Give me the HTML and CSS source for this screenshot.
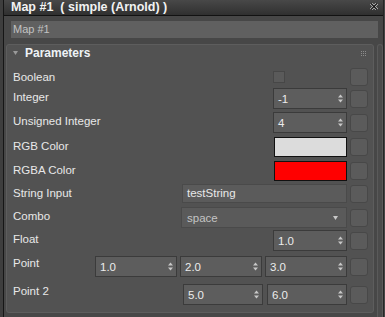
FILE: index.html
```html
<!DOCTYPE html>
<html>
<head>
<meta charset="utf-8">
<link rel="stylesheet" href="styles.css">
</head>
<body>
<div class="frame">
  <div class="left-strip"></div>
  <div class="window">
    <div class="titlebar">
      <span class="title">Map #1  ( simple (Arnold) )</span>
      <svg class="close" width="8" height="7" viewBox="0 0 8 7">
        <path d="M1 0.5 L7 6.5 M7 0.5 L1 6.5" stroke="#d8d8d8" stroke-width="2.6" stroke-linecap="square"/>
        <path d="M1 0.5 L7 6.5 M7 0.5 L1 6.5" stroke="#141414" stroke-width="1.4" stroke-linecap="square"/>
      </svg>
    </div>
    <div class="name-field">Map #1</div>
    <div class="content">
      <div class="panel">
        <div class="panel-head">
          <svg class="tri" width="5" height="4" viewBox="0 0 5 4"><polygon points="0,0 5,0 2.5,4" fill="#9a9a9a"/></svg>
          <span class="ptitle">Parameters</span>
          <svg class="grip" width="5" height="5" viewBox="0 0 5 5">
            <g fill="#8c8c8c">
              <rect x="0" y="0" width="1" height="1"/><rect x="2" y="0" width="1" height="1"/><rect x="4" y="0" width="1" height="1"/>
              <rect x="0" y="2" width="1" height="1"/><rect x="2" y="2" width="1" height="1"/><rect x="4" y="2" width="1" height="1"/>
              <rect x="0" y="4" width="1" height="1"/><rect x="2" y="4" width="1" height="1"/><rect x="4" y="4" width="1" height="1"/>
            </g>
          </svg>
        </div>
        <div class="rows">
          <div class="row row-bool">
            <span class="label">Boolean</span>
            <div class="ctl ctl-single"><span class="checkbox"></span></div>
            <span class="sq"></span>
          </div>
          <div class="row row-int">
            <span class="label">Integer</span>
            <div class="ctl ctl-single"><div class="spin"><span class="val">-1</span><svg class="arr" width="5" height="9" viewBox="0 0 5 9"><polygon points="0,3.5 5,3.5 2.5,0.5" fill="#c8c8c8"/><polygon points="0,5.5 5,5.5 2.5,8.5" fill="#c8c8c8"/></svg></div></div>
            <span class="sq"></span>
          </div>
          <div class="row row-uint">
            <span class="label">Unsigned Integer</span>
            <div class="ctl ctl-single"><div class="spin"><span class="val">4</span><svg class="arr" width="5" height="9" viewBox="0 0 5 9"><polygon points="0,3.5 5,3.5 2.5,0.5" fill="#c8c8c8"/><polygon points="0,5.5 5,5.5 2.5,8.5" fill="#c8c8c8"/></svg></div></div>
            <span class="sq"></span>
          </div>
          <div class="row row-rgb">
            <span class="label">RGB Color</span>
            <div class="ctl ctl-single"><span class="swatch swatch-grey"></span></div>
            <span class="sq"></span>
          </div>
          <div class="row row-rgba">
            <span class="label">RGBA Color</span>
            <div class="ctl ctl-single"><span class="swatch swatch-red"></span></div>
            <span class="sq"></span>
          </div>
          <div class="row row-str">
            <span class="label">String Input</span>
            <div class="ctl ctl-wide"><div class="text-field">testString</div></div>
            <span class="sq"></span>
          </div>
          <div class="row row-combo">
            <span class="label">Combo</span>
            <div class="ctl ctl-wide"><div class="combo"><span class="combo-val">space</span><svg class="carr" width="5" height="4" viewBox="0 0 5 4"><polygon points="0,0 5,0 2.5,4" fill="#c8c8c8"/></svg></div></div>
            <span class="sq"></span>
          </div>
          <div class="row row-float">
            <span class="label">Float</span>
            <div class="ctl ctl-single"><div class="spin"><span class="val">1.0</span><svg class="arr" width="5" height="9" viewBox="0 0 5 9"><polygon points="0,3.5 5,3.5 2.5,0.5" fill="#c8c8c8"/><polygon points="0,5.5 5,5.5 2.5,8.5" fill="#c8c8c8"/></svg></div></div>
            <span class="sq"></span>
          </div>
          <div class="row row-point">
            <span class="label label-top">Point</span>
            <div class="ctl ctl-triple">
              <div class="spin"><span class="val">1.0</span><svg class="arr" width="5" height="9" viewBox="0 0 5 9"><polygon points="0,3.5 5,3.5 2.5,0.5" fill="#c8c8c8"/><polygon points="0,5.5 5,5.5 2.5,8.5" fill="#c8c8c8"/></svg></div>
              <div class="spin"><span class="val">2.0</span><svg class="arr" width="5" height="9" viewBox="0 0 5 9"><polygon points="0,3.5 5,3.5 2.5,0.5" fill="#c8c8c8"/><polygon points="0,5.5 5,5.5 2.5,8.5" fill="#c8c8c8"/></svg></div>
              <div class="spin"><span class="val">3.0</span><svg class="arr" width="5" height="9" viewBox="0 0 5 9"><polygon points="0,3.5 5,3.5 2.5,0.5" fill="#c8c8c8"/><polygon points="0,5.5 5,5.5 2.5,8.5" fill="#c8c8c8"/></svg></div>
            </div>
            <span class="sq"></span>
          </div>
          <div class="row row-point2">
            <span class="label label-top">Point 2</span>
            <div class="ctl ctl-double">
              <div class="spin"><span class="val">5.0</span><svg class="arr" width="5" height="9" viewBox="0 0 5 9"><polygon points="0,3.5 5,3.5 2.5,0.5" fill="#c8c8c8"/><polygon points="0,5.5 5,5.5 2.5,8.5" fill="#c8c8c8"/></svg></div>
              <div class="spin"><span class="val">6.0</span><svg class="arr" width="5" height="9" viewBox="0 0 5 9"><polygon points="0,3.5 5,3.5 2.5,0.5" fill="#c8c8c8"/><polygon points="0,5.5 5,5.5 2.5,8.5" fill="#c8c8c8"/></svg></div>
            </div>
            <span class="sq"></span>
          </div>
        </div>
      </div>
      <div class="scrollbar"></div>
    </div>
  </div>
</div>
</body>
</html>
```

FILE: styles.css
```css
html, body {
  margin: 0;
  padding: 0;
  background: #464646;
  width: 385px;
  height: 317px;
  overflow: hidden;
  font-family: "Liberation Sans", Arial, sans-serif;
}

.frame {
  display: flex;
  width: 385px;
  height: 317px;
  overflow: hidden;
}

.left-strip {
  width: 3px;
  background: #3e3e3e;
  flex: none;
}

.window {
  width: 379px;
  flex: none;
  border-left: 1px solid #161616;
  border-right: 1px solid #262626;
  background: #474747;
  display: flex;
  flex-direction: column;
  overflow: hidden;
}

.titlebar {
  height: 15px;
  flex: none;
  border-bottom: 1px solid #121212;
  background: linear-gradient(#484848, #303030);
  display: flex;
  align-items: center;
  padding: 0 5px 0 7px;
}

.title {
  flex: 1;
  white-space: pre;
  color: #f2f2f2;
  font-weight: bold;
  font-size: 12.5px;
  line-height: 14px;
  padding-bottom: 1px;
}

.close {
  display: block;
  margin-top: -2px;
}

.name-field {
  flex: none;
  margin: 5px 5px 0 7px;
  height: 17px;
  background: #606060;
  color: #c2c2c2;
  font-size: 11px;
  line-height: 17px;
  padding-left: 2px;
}

.content {
  display: flex;
  align-items: flex-start;
  margin-top: 6px;
  flex: 1;
  min-height: 0;
}

.panel {
  margin-left: 2px;
  width: 368px;
  flex: none;
  box-sizing: border-box;
  border: 1px solid #5d5d5d;
  border-radius: 3px;
  background: #525252;
  padding: 0 5px 7px 6px;
}

.panel-head {
  height: 16px;
  display: flex;
  align-items: center;
}

.tri {
  display: block;
  margin-right: 7px;
}

.ptitle {
  flex: 1;
  color: #eef2f6;
  font-weight: bold;
  font-size: 12px;
}

.grip {
  display: block;
  margin-right: 2px;
}

.rows {
  margin-top: 7px;
  display: flex;
  flex-direction: column;
}

.row {
  display: flex;
  align-items: center;
  height: 21px;
}

.row-bool { height: 18px; }
.row-int { margin-top: 2px; }
.row-uint { margin-top: 3px; }
.row-rgb { margin-top: 4px; height: 20px; }
.row-rgba { margin-top: 4px; height: 20px; }
.row-str { margin-top: 3px; height: 19px; }
.row-combo { margin-top: 4px; }
.row-float { margin-top: 2px; }
.row-point { margin-top: 5px; }
.row-point2 { margin-top: 7px; }

.label {
  flex: 1;
  align-self: flex-start;
  padding-top: 2px;
  line-height: 14px;
  font-size: 11.5px;
  color: #e8e8e8;
  white-space: nowrap;
}

.label-top { padding-top: 0; }

.ctl {
  display: flex;
  height: 100%;
  align-items: center;
}

.ctl-single { width: 74px; }
.ctl-wide { width: 166px; }
.ctl-triple { width: 252px; gap: 3px; }
.ctl-double { width: 164px; gap: 4px; }

.sq {
  width: 18px;
  height: 18px;
  margin-left: 3px;
  box-sizing: border-box;
  border: 1px solid #484848;
  border-radius: 3px;
  background: #5b5b5b;
  flex: none;
}

.checkbox {
  width: 12px;
  height: 12px;
  box-sizing: border-box;
  border: 1px solid #474747;
  background: #5a5a5a;
}

.spin {
  flex: 1;
  height: 21px;
  box-sizing: border-box;
  border: 1px solid #3b3b3b;
  background: #5d5d5d;
  display: flex;
  align-items: center;
  padding: 0 3px 0 4px;
}

.val {
  flex: 1;
  color: #ececec;
  font-size: 11.5px;
}

.arr { display: block; }

.swatch {
  width: 100%;
  height: 20px;
  box-sizing: border-box;
  border: 1px solid #111111;
  margin-left: 1px;
}

.swatch-grey { background: #dcdcdc; }
.swatch-red { background: #ff0000; }

.text-field {
  width: 100%;
  height: 19px;
  box-sizing: border-box;
  border: 1px solid #4a4a4a;
  background: #5b5b5b;
  color: #e8e8e8;
  font-size: 11.5px;
  line-height: 17px;
  padding-left: 4px;
  margin-left: 1px;
}

.combo {
  width: 100%;
  height: 21px;
  box-sizing: border-box;
  border: 1px solid #4a4a4a;
  background: #5a5a5a;
  display: flex;
  align-items: center;
  padding: 0 8px 0 5px;
}

.combo-val {
  flex: 1;
  color: #c4c4c4;
  font-size: 11.5px;
}

.carr { display: block; }

.scrollbar {
  margin-left: 3px;
  width: 6px;
  align-self: stretch;
  box-sizing: border-box;
  border: 1px solid #5a5a5a;
  border-bottom: none;
  border-radius: 3px 3px 0 0;
  background: #4b4b4b;
}
```
